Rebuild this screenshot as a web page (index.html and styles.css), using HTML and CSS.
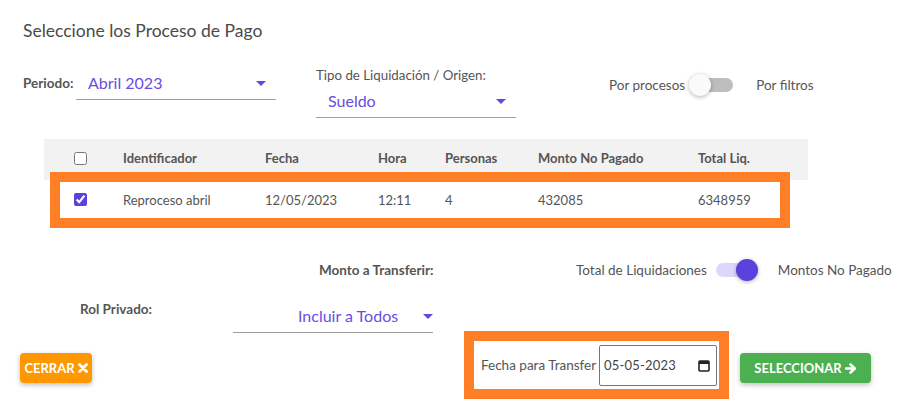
FILE: index.html
```html
<!DOCTYPE html>
<html lang="es">
<head>
	<meta charset="UTF-8">
	<title>Seleccione los Proceso de Pago</title>
	<link rel="stylesheet" href="styles.css">
</head>
<body>
	<div class="page">
		<h2 class="title">Seleccione los Proceso de Pago</h2>

		<div class="row1">
			<div class="field-inline">
				<label class="lbl lbl-periodo">Periodo:</label>
				<div class="select">
					<span class="select-val">Abril 2023</span>
					<span class="caret"></span>
				</div>
			</div>
			<div class="field-stack">
				<label class="lbl-light">Tipo de Liquidación / Origen:</label>
				<div class="select">
					<span class="select-val">Sueldo</span>
					<span class="caret"></span>
				</div>
			</div>
			<div class="switch-group sg-top">
				<span>Por procesos</span>
				<span class="switch">
					<span class="track"></span>
					<span class="knob"></span>
				</span>
				<span class="after">Por filtros</span>
			</div>
		</div>

		<div class="table-wrap">
			<table class="tbl">
				<colgroup>
					<col style="width:79px">
					<col style="width:142px">
					<col style="width:113px">
					<col style="width:67px">
					<col style="width:93px">
					<col style="width:160px">
					<col style="width:110px">
				</colgroup>
				<thead>
					<tr>
						<th class="chk"><input type="checkbox"></th>
						<th>Identificador</th>
						<th>Fecha</th>
						<th>Hora</th>
						<th>Personas</th>
						<th>Monto No Pagado</th>
						<th>Total Liq.</th>
					</tr>
				</thead>
				<tbody>
					<tr>
						<td class="chk"><input type="checkbox" checked></td>
						<td>Reproceso abril</td>
						<td>12/05/2023</td>
						<td>12:11</td>
						<td>4</td>
						<td>432085</td>
						<td>6348959</td>
					</tr>
				</tbody>
			</table>
			<div class="mark-row"></div>
		</div>

		<div class="row2">
			<label class="lbl lbl-monto">Monto a Transferir:</label>
			<div class="switch-group">
				<span>Total de Liquidaciones</span>
				<span class="switch on">
					<span class="track"></span>
					<span class="knob"></span>
				</span>
				<span class="after">Montos No Pagado</span>
			</div>
		</div>

		<div class="row3">
			<label class="lbl lbl-rol">Rol Privado:</label>
			<div class="select select-rol">
				<span class="select-val">Incluir a Todos</span>
				<span class="caret"></span>
			</div>
		</div>

		<div class="row4">
			<button class="btn btn-cerrar">CERRAR
				<svg width="10" height="10" viewBox="0 0 10 10"><path d="M1.5 1.5 L8.5 8.5 M8.5 1.5 L1.5 8.5" stroke="#fff" stroke-width="2.8" stroke-linecap="round"/></svg>
			</button>
			<div class="date-box">
				<span class="date-lbl">Fecha para Transfer</span>
				<div class="date-input">
					<span>05-05-2023</span>
					<svg width="12" height="13" viewBox="0 0 12 13"><rect x="1" y="2" width="10" height="10" rx="1" fill="none" stroke="#222" stroke-width="1.6"/><rect x="1" y="2" width="10" height="3" fill="#222"/></svg>
				</div>
			</div>
			<button class="btn btn-sel">SELECCIONAR
				<svg width="12" height="11" viewBox="0 0 12 11"><path d="M1 5.5 H9 M5.5 1.5 L9.8 5.5 L5.5 9.5" fill="none" stroke="#fff" stroke-width="2.6" stroke-linejoin="round" stroke-linecap="round"/></svg>
			</button>
		</div>
	</div>
</body>
</html>
```

FILE: styles.css
```css
*{
	margin: 0;
	padding: 0;
	box-sizing: border-box;
}
body{
	font-family: Lato, "Noto Sans", sans-serif;
	color: #555;
	background: #fff;
}
.page{
	width: 897px;
	height: 406px;
	overflow: hidden;
}
.title{
	font-size: 17.5px;
	font-weight: 400;
	line-height: 20px;
	color: #4a4a4a;
	margin: 21px 0 0 23px;
}
/* fila periodo / tipo */
.row1{
	display: flex;
	align-items: flex-start;
	margin-top: 25px;
	padding-left: 23px;
}
.field-inline{
	display: flex;
	align-items: center;
}
.lbl{
	font-size: 13.5px;
	font-weight: 700;
	color: #555;
}
.lbl-periodo{
	width: 53px;
}
.select{
	position: relative;
	width: 200px;
	height: 34px;
	border-bottom: 1px solid #9e9e9e;
	display: flex;
	align-items: center;
	padding-left: 12px;
}
.select-val{
	font-size: 16px;
	color: #6a4de2;
}
.caret{
	position: absolute;
	right: 10px;
	top: 15px;
	width: 0;
	height: 0;
	border-left: 5px solid transparent;
	border-right: 5px solid transparent;
	border-top: 5px solid #6446e0;
}
.field-stack{
	margin-left: 40px;
}
.lbl-light{
	display: block;
	font-size: 13.3px;
	line-height: 18px;
	color: #555;
}
.switch-group{
	display: flex;
	align-items: center;
	font-size: 13.5px;
	color: #555;
}
.sg-top{
	margin-left: 93px;
	margin-top: 7px;
}
.switch{
	position: relative;
	display: inline-block;
	width: 46px;
	height: 24px;
	margin-left: 3px;
}
.track{
	position: absolute;
	left: 11px;
	top: 5px;
	width: 34px;
	height: 14px;
	border-radius: 7px;
	background: #bdbdbd;
}
.knob{
	position: absolute;
	left: 1px;
	top: 1px;
	width: 22px;
	height: 22px;
	border-radius: 50%;
	background: #fafafa;
	box-shadow: 0 1px 4px rgba(0,0,0,0.3);
}
.switch-group .after{
	margin-left: 22px;
}
.switch.on{
	margin-left: 9px;
}
.switch.on .track{
	left: 0;
	background: #ddd8fb;
}
.switch.on .knob{
	left: 20px;
	background: #5b40db;
}
.switch.on + .after{
	margin-left: 16px;
}
/* tabla */
.table-wrap{
	position: relative;
	margin: 21px 0 0 44px;
	width: 764px;
}
.tbl{
	width: 764px;
	border-collapse: collapse;
	table-layout: fixed;
	font-size: 13px;
}
.tbl th{
	height: 41px;
	padding-bottom: 3px;
	background: #f2f2f2;
	text-align: left;
	font-weight: 700;
	color: #555;
}
.tbl td{
	height: 40px;
	padding-bottom: 1px;
	color: #555;
}
.tbl .chk{
	padding-left: 26px;
}
.tbl input{
	display: block;
	width: 13px;
	height: 13px;
	margin: 0 0 0 4px;
	accent-color: #5b40db;
}
.mark-row{
	position: absolute;
	left: 6px;
	top: 33px;
	width: 740px;
	height: 56px;
	border: 10px solid #ff7f27;
}
/* monto a transferir */
.row2{
	display: flex;
	align-items: center;
	margin-top: 38px;
	padding-left: 319px;
}
.lbl-monto{
	width: 257px;
}
.row3{
	display: flex;
	align-items: flex-start;
	margin-top: 18px;
	padding-left: 80px;
}
.lbl-rol{
	width: 153px;
	line-height: 18px;
}
.select-rol{
	padding-left: 65px;
	margin-top: -1px;
}
.select-rol .caret{
	right: 0;
}
/* botones */
.row4{
	display: flex;
	align-items: flex-start;
	margin-top: -2px;
	padding-left: 20px;
}
.btn{
	border: none;
	border-radius: 4px;
	color: #fff;
	font-family: inherit;
	font-size: 13px;
	font-weight: 700;
	height: 30px;
	margin-top: 22px;
	display: flex;
	align-items: center;
	justify-content: center;
	gap: 3px;
	box-shadow: 0 2px 5px rgba(0,0,0,0.25);
	cursor: pointer;
}
.btn-cerrar{
	width: 72px;
	background: #ff9800;
}
.btn-sel{
	width: 131px;
	margin-left: 11px;
	background: #4caf50;
}
.date-box{
	margin-left: 372px;
	width: 265px;
	height: 68px;
	border: 10px solid #ff7f27;
	display: flex;
	align-items: center;
	padding-left: 7px;
}
.date-lbl{
	font-size: 13.5px;
	color: #555;
	width: 118px;
}
.date-input{
	width: 118px;
	height: 41px;
	border: 1px solid #767676;
	border-radius: 2px;
	display: flex;
	align-items: center;
	justify-content: space-between;
	padding: 0 6px 0 4px;
	font-size: 13px;
	letter-spacing: 0.2px;
	color: #444;
}
```
